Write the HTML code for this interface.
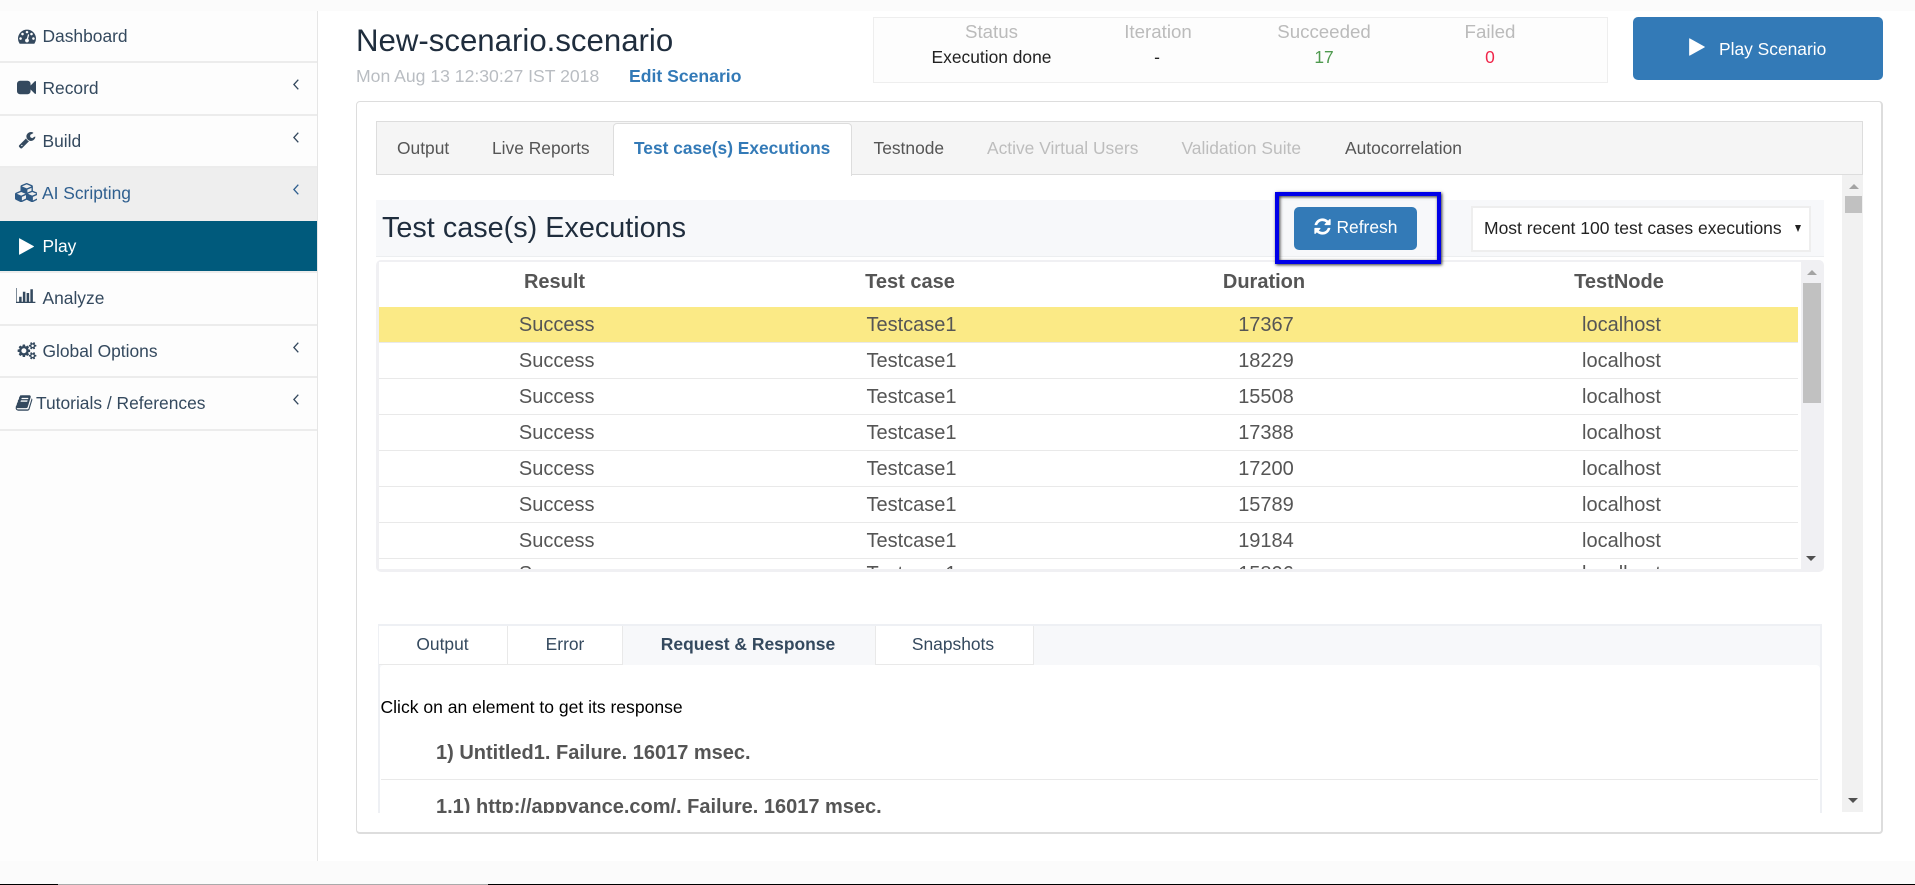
<!DOCTYPE html>
<html><head><meta charset="utf-8"><title>New-scenario.scenario</title>
<style>
html,body{margin:0;padding:0;width:1915px;height:885px;overflow:hidden;background:#fbfbfb;font-family:"Liberation Sans",Arial,sans-serif;}
.a{position:absolute;}
.t{position:absolute;white-space:nowrap;line-height:24px;height:24px;font-size:17.4px;}
.c{transform:translateX(-50%);}
.m{color:#34495e;left:42.5px;}
.sep{position:absolute;left:0;width:317px;height:2px;background:#ececec;}
.ic{position:absolute;fill:#34495e;display:block;}
.ch{position:absolute;left:293px;width:6px;height:11px;fill:none;stroke:#34495e;stroke-width:1.3;}
.lb{color:#bbbbbb;font-size:18.7px;}
.tb{color:#555;}
.dis{color:#bdbdbd;}
.h{font-size:20px;font-weight:bold;color:#555;top:270px;}
.line{position:absolute;left:379px;width:1419px;height:1px;background:#e9e9e9;}
.r{font-size:20px;color:#555;}
.lt{color:#34495e;top:632px;}
</style></head>
<body>
<!-- main background -->
<div class="a" style="left:0;top:11px;width:317px;height:850px;background:#fdfdfd;"></div>
<div class="a" style="left:317px;top:11px;width:1px;height:850px;background:#e6e6e6;"></div>
<div class="a" style="left:318px;top:11px;width:1597px;height:850px;background:#fff;"></div>

<!-- sidebar -->
<div class="a" style="left:0;top:168px;width:317px;height:53px;background:#eeeeee;"></div>
<div class="a" style="left:0;top:221px;width:317px;height:50px;background:#005a7c;"></div>
<div class="sep" style="top:61px"></div><div class="sep" style="top:114px"></div><div class="sep" style="top:166px"></div>
<div class="sep" style="top:271px"></div><div class="sep" style="top:324px"></div><div class="sep" style="top:376px"></div><div class="sep" style="top:429px"></div>

<svg class="ic" style="left:17.5px;top:27px" width="18" height="18" viewBox="0 0 1792 1792"><path d="M384 1152q0-53-37.5-90.5t-90.5-37.5-90.5 37.5-37.5 90.5 37.5 90.5 90.5 37.5 90.5-37.5 37.5-90.5zm192-448q0-53-37.5-90.5t-90.5-37.5-90.5 37.5-37.5 90.5 37.5 90.5 90.5 37.5 90.5-37.5 37.5-90.5zm428 481l101-382q6-26-7.5-48.5t-38.5-29.5-48 6.5-30 39.5l-101 382q-60 5-107 43.5t-63 98.5q-20 77 20 146t117 89 146-20 89-117q16-60-6-117t-72-91zm660-33q0-53-37.5-90.5t-90.5-37.5-90.5 37.5-37.5 90.5 37.5 90.5 90.5 37.5 90.5-37.5 37.5-90.5zm-640-640q0-53-37.5-90.5t-90.5-37.5-90.5 37.5-37.5 90.5 37.5 90.5 90.5 37.5 90.5-37.5 37.5-90.5zm448 192q0-53-37.5-90.5t-90.5-37.5-90.5 37.5-37.5 90.5 37.5 90.5 90.5 37.5 90.5-37.5 37.5-90.5zm320 448q0 261-141 483-19 29-54 29h-1402q-35 0-54-29-141-221-141-483 0-182 71-348t191-286 286-191 348-71 348 71 286 191 191 286 71 348z"/></svg>
<div class="t m" style="top:24px">Dashboard</div>

<svg class="ic" style="left:17px;top:78px" width="19" height="19" viewBox="0 0 1792 1792"><path d="M1792 352v1088q0 42-39 59-13 5-25 5-27 0-45-19l-403-403v166q0 119-84.5 203.5t-203.5 84.5h-704q-119 0-203.5-84.5t-84.5-203.5v-704q0-119 84.5-203.5t203.5-84.5h704q119 0 203.5 84.5t84.5 203.5v165l403-402q18-19 45-19 12 0 25 5 39 17 39 59z"/></svg>
<div class="t m" style="top:76px">Record</div>
<svg class="ch" style="top:79px" viewBox="0 0 6 11"><path d="M5.3 .7L.9 5.5l4.4 4.8"/></svg>

<svg class="ic" style="left:17.5px;top:132px" width="18" height="18" viewBox="0 0 1792 1792"><path d="M448 1344q0-26-19-45t-45-19-45 19-19 45 19 45 45 19 45-19 19-45zm644-420l-682 682q-37 37-90 37-52 0-91-37l-106-108q-38-36-38-90 0-53 38-91l681-681q39 98 114.5 173.5t173.5 114.5zm634-435q0 39-23 106-47 134-164.5 217.5t-258.5 83.5q-185 0-316.5-131.5t-131.5-316.5 131.5-316.5 316.5-131.5q58 0 121.5 16.5t107.5 46.5q16 11 16 28t-16 28l-293 169v224l193 107q5-3 79-48.5t135.5-81 70.5-35.5q15 0 23.5 10t8.5 25z"/></svg>
<div class="t m" style="top:129px">Build</div>
<svg class="ch" style="top:132px" viewBox="0 0 6 11"><path d="M5.3 .7L.9 5.5l4.4 4.8"/></svg>

<svg class="ic" style="left:15px;top:183px;fill:#2f5a85" width="22" height="19.25" viewBox="0 0 2048 1792"><path d="M640 1632l384-192v-314l-384 164v342zm-64-454l404-173-404-173-404 173zm1088 454l384-192v-314l-384 164v342zm-64-454l404-173-404-173-404 173zm-448-293l384-165v-266l-384 164v267zm-64-379l441-189-441-189-441 189zm1088 518v416q0 36-19 67t-52 47l-448 224q-25 14-57 14t-57-14l-448-224q-5-2-7-4-2 2-7 4l-448 224q-25 14-57 14t-57-14l-448-224q-33-16-52-47t-19-67v-416q0-38 21.5-70t56.5-48l434-186v-400q0-38 21.5-70t56.5-48l448-192q23-10 50-10t50 10l448 192q35 16 56.5 48t21.5 70v400l434 186q36 16 57 48t21 70z"/></svg>
<div class="t" style="left:42px;top:181px;color:#2f5f8f">AI Scripting</div>
<svg class="ch" style="top:184px;stroke:#2f5f8f" viewBox="0 0 6 11"><path d="M5.3 .7L.9 5.5l4.4 4.8"/></svg>

<svg class="ic" style="left:17px;top:236.5px;fill:#fff" width="19" height="19" viewBox="0 0 1792 1792"><path d="M1576 927l-1328 738q-23 13-39.5 3t-16.5-36v-1472q0-26 16.5-36t39.5 3l1328 738q23 13 23 31t-23 31z"/></svg>
<div class="t" style="left:42.5px;top:234px;color:#fff">Play</div>

<svg class="ic" style="left:16px;top:288px" width="20" height="17.5" viewBox="0 0 2048 1792"><path d="M576 896v512h-256v-512h256zm384-512v1024h-256v-1024h256zm1024 1024v128h-2048v-1536h128v1408h1920zm-640-896v896h-256v-896h256zm384-384v1280h-256v-1280h256z"/></svg>
<div class="t" style="left:42.5px;top:286px;color:#34495e">Analyze</div>

<svg class="ic" style="left:16.5px;top:342px" width="20" height="17.5" viewBox="0 0 2048 1792"><path d="M960 896q0-106-75-181t-181-75-181 75-75 181 75 181 181 75 181-75 75-181zm768 512q0-52-38-90t-90-38-90 38-38 90q0 53 37.5 90.5t90.5 37.5 90.5-37.5 37.5-90.5zm0-1024q0-52-38-90t-90-38-90 38-38 90q0 53 37.5 90.5t90.5 37.5 90.5-37.5 37.5-90.5zm-384 421v185q0 10-7 19.5t-16 10.5l-155 24q-11 35-32 76 34 48 90 115 7 11 7 20 0 12-7 19-23 30-82.5 89.5t-78.5 59.5q-11 0-21-7l-115-90q-37 19-77 31-11 108-23 155-7 24-30 24h-186q-11 0-20-7.5t-10-17.5l-23-153q-34-10-75-31l-118 89q-7 7-20 7-11 0-21-8-144-133-144-160 0-9 7-19 10-14 41-53t47-61q-23-44-35-82l-152-24q-10-1-17-9.5t-7-19.5v-185q0-10 7-19.5t16-10.5l155-24q11-35 32-76-34-48-90-115-7-11-7-20 0-12 7-20 22-30 82-89t79-59q11 0 21 7l115 90q34-18 77-32 11-108 23-154 7-24 30-24h186q11 0 20 7.5t10 17.5l23 153q34 10 75 31l118-89q8-7 20-7 11 0 21 8 144 133 144 160 0 8-7 19-12 16-42 54t-45 60q23 48 34 82l152 23q10 2 17 10.5t7 19.5zm640 533v140q0 16-149 31-12 27-30 52 51 113 51 138 0 4-4 7-122 71-124 71-8 0-46-47t-52-68q-20 2-30 2t-30-2q-14 21-52 68t-46 47q-2 0-124-71-4-3-4-7 0-25 51-138-18-25-30-52-149-15-149-31v-140q0-16 149-31 13-29 30-52-51-113-51-138 0-4 4-7 4-2 35-20t59-34 30-16q8 0 46 46.5t52 67.5q20-2 30-2t30 2q51-71 92-112l6-2q4 0 124 70 4 3 4 7 0 25-51 138 17 23 30 52 149 15 149 31zm0-1024v140q0 16-149 31-12 27-30 52 51 113 51 138 0 4-4 7-122 71-124 71-8 0-46-47t-52-68q-20 2-30 2t-30-2q-14 21-52 68t-46 47q-2 0-124-71-4-3-4-7 0-25 51-138-18-25-30-52-149-15-149-31v-140q0-16 149-31 13-29 30-52-51-113-51-138 0-4 4-7 4-2 35-20t59-34 30-16q8 0 46 46.5t52 67.5q20-2 30-2t30 2q51-71 92-112l6-2q4 0 124 70 4 3 4 7 0 25-51 138 17 23 30 52 149 15 149 31z"/></svg>
<div class="t m" style="top:339px">Global Options</div>
<svg class="ch" style="top:342px" viewBox="0 0 6 11"><path d="M5.3 .7L.9 5.5l4.4 4.8"/></svg>

<svg class="ic" style="left:14.5px;top:394px" width="18" height="18" viewBox="0 0 1792 1792"><path d="M1703 478q40 57 18 129l-275 906q-19 64-76.5 107.5t-122.5 43.5h-923q-77 0-148.5-53.5t-99.5-131.5q-24-67-2-127 0-4 3-27t4-37q1-8-3-21.5t-3-19.5q2-11 8-21t16.5-23.5 16.5-23.5q23-38 45-91.5t30-91.5q3-10 .5-30t-.5-28q3-11 17-28t17-23q21-36 42-92t25-90q1-9-2.5-32t.5-28q4-13 22-30.5t22-22.5q19-26 42.5-84.5t27.5-96.5q1-8-3-25.5t-2-26.5q2-8 9-18t18-23 17-21q8-12 16.5-30.5t15-35 16-36 19.5-32 26.5-23.5 36-11.5 47.5 5.5l-1 3q38-9 51-9h761q74 0 114 56t18 130l-274 906q-36 119-71.5 153.5t-128.5 34.5h-869q-27 0-38 15-11 16-1 43 24 70 144 70h923q29 0 56-15.5t35-41.5l300-987q7-22 5-57 38 15 59 43zm-1064 2q-4 13 2 22.5t20 9.5h608q13 0 25.5-9.5t16.5-22.5l21-64q4-13-2-22.5t-20-9.5h-608q-13 0-25.5 9.5t-16.5 22.5zm-83 256q-4 13 2 22.5t20 9.5h608q13 0 25.5-9.5t16.5-22.5l21-64q4-13-2-22.5t-20-9.5h-608q-13 0-25.5 9.5t-16.5 22.5z"/></svg>
<div class="t" style="left:36px;top:391px;color:#34495e">Tutorials / References</div>
<svg class="ch" style="top:394px" viewBox="0 0 6 11"><path d="M5.3 .7L.9 5.5l4.4 4.8"/></svg>

<!-- header -->
<div class="t" style="left:356px;top:21px;height:40px;line-height:40px;font-size:31.2px;color:#1f2d3d">New-scenario.scenario</div>
<div class="t" style="left:356px;top:64px;color:#b9bdc2;font-size:17.6px">Mon Aug 13 12:30:27 IST 2018</div>
<div class="t" style="left:629px;top:64px;color:#337ab7;font-weight:bold;font-size:17.6px">Edit Scenario</div>

<div class="a" style="left:873px;top:17px;width:733px;height:64px;border:1px solid #eeeeee;background:#fdfdfd;"></div>
<div class="t c lb" style="left:991.5px;top:20px">Status</div>
<div class="t c lb" style="left:1158px;top:20px">Iteration</div>
<div class="t c lb" style="left:1324px;top:20px">Succeeded</div>
<div class="t c lb" style="left:1490px;top:20px">Failed</div>
<div class="t c" style="left:991.5px;top:45px;color:#222">Execution done</div>
<div class="t c" style="left:1157px;top:45px;color:#222">-</div>
<div class="t c" style="left:1324px;top:45px;color:#4f9a4f">17</div>
<div class="t c" style="left:1490px;top:45px;color:#f0274b">0</div>

<div class="a" style="left:1633px;top:17px;width:250px;height:63px;background:#337ab7;border-radius:5px;"></div>
<svg class="a" style="left:1687px;top:36.5px;fill:#fff" width="20" height="20" viewBox="0 0 1792 1792"><path d="M1576 927l-1328 738q-23 13-39.5 3t-16.5-36v-1472q0-26 16.5-36t39.5 3l1328 738q23 13 23 31t-23 31z"/></svg>
<div class="t" style="left:1719px;top:37px;color:#fff">Play Scenario</div>

<!-- card -->
<div class="a" style="left:356px;top:101px;width:1524px;height:730px;border:1px solid #dddddd;border-bottom:2px solid #dddddd;border-right:2px solid #dddddd;border-radius:4px;background:#fff;"></div>
<div class="a" style="left:376px;top:121px;width:1485px;height:52px;background:#f5f5f5;border:1px solid #dddddd;"></div>
<div class="a" style="left:613px;top:123px;width:237px;height:52px;background:#fff;border:1px solid #dddddd;border-bottom:none;border-radius:4px 4px 0 0;"></div>
<div class="t tb" style="left:397px;top:136px">Output</div>
<div class="t tb" style="left:492px;top:136px">Live Reports</div>
<div class="t" style="left:634px;top:136px;color:#337ab7;font-weight:bold;font-size:17.35px">Test case(s) Executions</div>
<div class="t tb" style="left:873.5px;top:136px">Testnode</div>
<div class="t dis" style="left:987px;top:136px">Active Virtual Users</div>
<div class="t dis" style="left:1181.5px;top:136px">Validation Suite</div>
<div class="t tb" style="left:1345px;top:136px">Autocorrelation</div>

<!-- outer scrollbar -->
<div class="a" style="left:1842px;top:175px;width:21px;height:637px;background:#f1f1f1;"></div>
<div class="a" style="left:1845px;top:196px;width:17px;height:17px;background:#c1c1c1;"></div>
<div class="a" style="left:1848.5px;top:184px;width:0;height:0;border-left:5px solid transparent;border-right:5px solid transparent;border-bottom:5px solid #a3a3a3;"></div>
<div class="a" style="left:1848px;top:798px;width:0;height:0;border-left:5px solid transparent;border-right:5px solid transparent;border-top:5px solid #505050;"></div>

<!-- section header -->
<div class="a" style="left:376px;top:200px;width:1448px;height:56px;background:#f7f8fa;border-bottom:1px solid #eceef0;"></div>
<div class="t" style="left:382px;top:210px;height:36px;line-height:36px;font-size:28.8px;color:#1f2d3d">Test case(s) Executions</div>

<!-- select -->
<div class="a" style="left:1471px;top:206px;width:336px;height:42px;background:#fff;border:2px solid #eeeeee;"></div>
<div class="t" style="left:1484px;top:216px;color:#222;font-size:17.5px">Most recent 100 test cases executions</div>
<div class="a" style="left:1795px;top:225px;width:0;height:0;border-left:3.5px solid transparent;border-right:3.5px solid transparent;border-top:7px solid #222;"></div>

<!-- table -->
<div class="a" style="left:376px;top:260px;width:1448px;height:312px;background:#f0f0f3;border-radius:5px;"></div>
<div class="a" style="left:379px;top:262px;width:1422px;height:307px;background:#fff;overflow:hidden;"></div>
<div class="a" style="left:1803px;top:283px;width:18px;height:120px;background:#c1c1c1;"></div>
<div class="a" style="left:1807px;top:270px;width:0;height:0;border-left:5px solid transparent;border-right:5px solid transparent;border-bottom:5px solid #a3a3a3;"></div>
<div class="a" style="left:1806px;top:556px;width:0;height:0;border-left:5px solid transparent;border-right:5px solid transparent;border-top:5px solid #505050;"></div>

<div class="t c h" style="left:554.5px">Result</div>
<div class="t c h" style="left:910px">Test case</div>
<div class="t c h" style="left:1264px">Duration</div>
<div class="t c h" style="left:1619px">TestNode</div>

<div class="a" style="left:379px;top:307px;width:1419px;height:35px;background:#fbea86;"></div>
<div class="line" style="top:342px"></div><div class="line" style="top:378px"></div><div class="line" style="top:414px"></div><div class="line" style="top:450px"></div><div class="line" style="top:486px"></div><div class="line" style="top:522px"></div><div class="line" style="top:558px"></div>

<div class="t c r" style="left:556.7px;top:313px">Success</div><div class="t c r" style="left:911.5px;top:313px">Testcase1</div><div class="t c r" style="left:1266px;top:313px">17367</div><div class="t c r" style="left:1621.5px;top:313px">localhost</div>
<div class="t c r" style="left:556.7px;top:349px">Success</div><div class="t c r" style="left:911.5px;top:349px">Testcase1</div><div class="t c r" style="left:1266px;top:349px">18229</div><div class="t c r" style="left:1621.5px;top:349px">localhost</div>
<div class="t c r" style="left:556.7px;top:385px">Success</div><div class="t c r" style="left:911.5px;top:385px">Testcase1</div><div class="t c r" style="left:1266px;top:385px">15508</div><div class="t c r" style="left:1621.5px;top:385px">localhost</div>
<div class="t c r" style="left:556.7px;top:421px">Success</div><div class="t c r" style="left:911.5px;top:421px">Testcase1</div><div class="t c r" style="left:1266px;top:421px">17388</div><div class="t c r" style="left:1621.5px;top:421px">localhost</div>
<div class="t c r" style="left:556.7px;top:457px">Success</div><div class="t c r" style="left:911.5px;top:457px">Testcase1</div><div class="t c r" style="left:1266px;top:457px">17200</div><div class="t c r" style="left:1621.5px;top:457px">localhost</div>
<div class="t c r" style="left:556.7px;top:493px">Success</div><div class="t c r" style="left:911.5px;top:493px">Testcase1</div><div class="t c r" style="left:1266px;top:493px">15789</div><div class="t c r" style="left:1621.5px;top:493px">localhost</div>
<div class="t c r" style="left:556.7px;top:529px">Success</div><div class="t c r" style="left:911.5px;top:529px">Testcase1</div><div class="t c r" style="left:1266px;top:529px">19184</div><div class="t c r" style="left:1621.5px;top:529px">localhost</div>
<div class="a" style="left:379px;top:559px;width:1419px;height:10px;overflow:hidden;">
<div class="t c r" style="left:177.7px;top:3px">Success</div><div class="t c r" style="left:532.5px;top:3px">Testcase1</div><div class="t c r" style="left:887px;top:3px">15806</div><div class="t c r" style="left:1242.5px;top:3px">localhost</div>
</div>

<!-- refresh highlight -->
<div class="a" style="left:1275px;top:192px;width:158px;height:64px;border:4px solid #0000e8;box-shadow:1px 1px 3px #333,inset 1px 1px 3px #333;"></div>
<div class="a" style="left:1294px;top:207px;width:123px;height:43px;background:#337ab7;border-radius:5px;"></div>
<svg class="a" style="left:1313px;top:217px;fill:#fff" width="19" height="19" viewBox="0 0 1792 1792"><path d="M1639 1056q0 5-1 7-64 268-268 434.5t-478 166.5q-146 0-282.5-55t-243.5-157l-129 129q-19 19-45 19t-45-19-19-45v-448q0-26 19-45t45-19h448q26 0 45 19t19 45-19 45l-137 137q71 66 161 102t187 36q134 0 250-65t186-179q11-17 53-117 8-23 30-23h192q13 0 22.5 9.5t9.5 22.5zm25-800v448q0 26-19 45t-45 19h-448q-26 0-45-19t-19-45 19-45l138-138q-148-137-349-137-134 0-250 65t-186 179q-11 17-53 117-8 23-30 23h-199q-13 0-22.5-9.5t-9.5-22.5v-7q65-268 270-434.5t480-166.5q146 0 284 55.5t245 156.5l130-129q19-19 45-19t45 19 19 45z"/></svg>
<div class="t" style="left:1336.5px;top:215px;color:#fff">Refresh</div>

<!-- lower panel -->
<div class="a" style="left:378px;top:624px;width:1444px;height:189px;background:#f7f8fa;border-top:2px solid #eef0f4;border-right:2px solid #eef0f4;border-left:2px solid #eef0f4;box-sizing:border-box;"></div>
<div class="a" style="left:379px;top:626px;width:128px;height:38px;background:#fff;border-right:1px solid #e9e9e9;border-bottom:1px solid #e9e9e9;"></div>
<div class="a" style="left:508px;top:626px;width:114px;height:38px;background:#fff;border-right:1px solid #e9e9e9;border-bottom:1px solid #e9e9e9;"></div>
<div class="a" style="left:875px;top:626px;width:157px;height:38px;background:#fff;border-right:1px solid #e9e9e9;border-left:1px solid #e9e9e9;border-bottom:1px solid #e9e9e9;"></div>
<div class="t c lt" style="left:442.5px">Output</div>
<div class="t c lt" style="left:565px">Error</div>
<div class="t c lt" style="left:748px;font-weight:bold;font-size:17.45px">Request &amp; Response</div>
<div class="t c lt" style="left:953px">Snapshots</div>
<div class="a" style="left:380px;top:665px;width:1440px;height:148px;background:#fff;border-radius:4px 4px 0 0;overflow:hidden;">
<div class="t" style="left:.5px;top:30px;color:#000;font-size:17.55px">Click on an element to get its response</div>
<div class="t" style="left:56px;top:76px;color:#555;font-weight:bold;font-size:20px">1) Untitled1. Failure. 16017 msec.</div>
<div class="a" style="left:1px;top:114px;width:1437px;height:1px;background:#e9e9e9;"></div>
<div class="t" style="left:56px;top:130px;color:#555;font-weight:bold;font-size:20px">1.1) http://appvance.com/. Failure. 16017 msec.</div>
</div>

<!-- bottom line -->
<div class="a" style="left:0;top:884px;width:1915px;height:1px;background:#000;"></div>
<div class="a" style="left:58px;top:884px;width:430px;height:1px;background:#aaaaaa;"></div>
</body></html>
